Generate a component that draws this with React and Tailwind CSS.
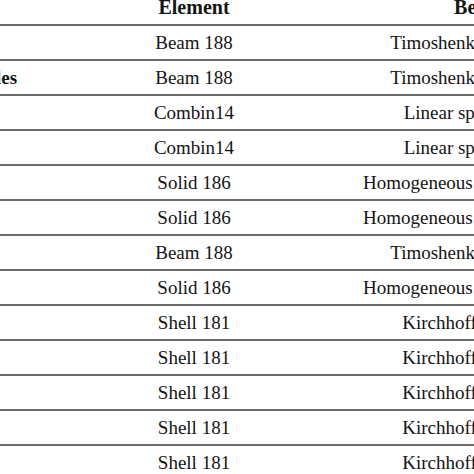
const ROWS = [
  { part: "", element: "Beam 188", model: "Timoshenko beam theory" },
  { part: "Stay cables", element: "Beam 188", model: "Timoshenko beam theory" },
  { part: "", element: "Combin14", model: "Linear spring element" },
  { part: "", element: "Combin14", model: "Linear spring element" },
  { part: "", element: "Solid 186", model: "Homogeneous isotropic material" },
  { part: "", element: "Solid 186", model: "Homogeneous isotropic material" },
  { part: "", element: "Beam 188", model: "Timoshenko beam theory" },
  { part: "", element: "Solid 186", model: "Homogeneous isotropic material" },
  { part: "", element: "Shell 181", model: "Kirchhoff plate theory" },
  { part: "", element: "Shell 181", model: "Kirchhoff plate theory" },
  { part: "", element: "Shell 181", model: "Kirchhoff plate theory" },
  { part: "", element: "Shell 181", model: "Kirchhoff plate theory" },
  { part: "", element: "Shell 181", model: "Kirchhoff plate theory" },
];

const cols = "grid grid-cols-[304px_140px_446px]";

export default function App() {
  return (
    <div
      className="w-[474px] h-[474px] overflow-hidden bg-white text-[#141414]"
      style={{ fontFamily: '"Liberation Serif", "DejaVu Serif", serif' }}
    >
      <div className="ml-[-180px] w-[890px]">
        {/* Header */}
        <div className={`${cols} h-[24px] text-[20px] font-bold leading-[20px] whitespace-nowrap`}>
          <div className="text-center mt-[-3px]"></div>
          <div className="text-center mt-[-3px]">Element</div>
          <div className="text-center mt-[-3px] pl-[12px]">Behavior</div>
        </div>

        {/* Body */}
        {ROWS.map((r, i) => (
          <div
            key={i}
            className={`${cols} h-[35px] border-t-2 border-[#6a6a6a] text-[19px] leading-[22px] whitespace-nowrap`}
          >
            <div className="flex items-center justify-center font-bold">{r.part}</div>
            <div className="flex items-center justify-center">{r.element}</div>
            <div className="flex items-center justify-center">{r.model}</div>
          </div>
        ))}
      </div>
    </div>
  );
}
